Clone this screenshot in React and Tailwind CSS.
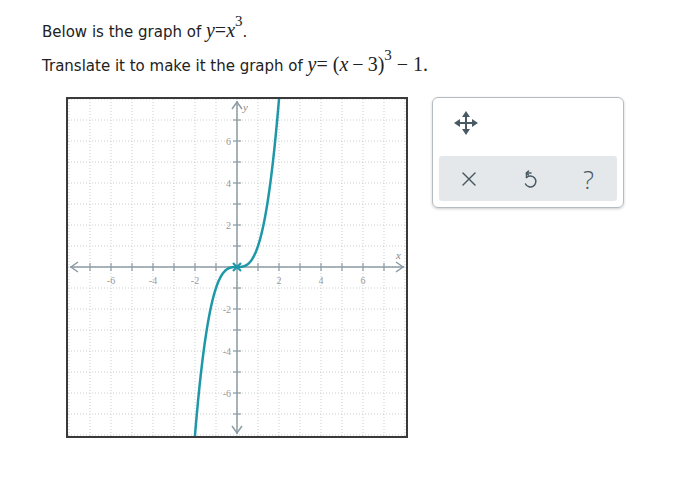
import React from 'react';

const U = 21;
const OX = 169;
const OY = 168;
const W = 338;
const H = 337;

const MoveIcon = () => (
  <svg width="28" height="28" viewBox="0 0 28 28" fill="#4a5a63" stroke="#4a5a63">
    <line x1="14" y1="5" x2="14" y2="23" strokeWidth="2" />
    <line x1="5" y1="14" x2="23" y2="14" strokeWidth="2" />
    <polygon points="14,2 10,8 18,8" stroke="none" />
    <polygon points="14,26 10,20 18,20" stroke="none" />
    <polygon points="2,14 8,10 8,18" stroke="none" />
    <polygon points="26,14 20,10 20,18" stroke="none" />
  </svg>
);

const CloseIcon = () => (
  <svg width="16" height="16" viewBox="0 0 16 16" stroke="#4a5a63" strokeWidth="1.5" strokeLinecap="round">
    <line x1="2" y1="2" x2="14" y2="14" />
    <line x1="2" y1="14" x2="14" y2="2" />
  </svg>
);

const UndoIcon = () => (
  <svg width="22" height="22" viewBox="0 0 22 22" fill="none" stroke="#4a5a63" strokeWidth="1.5" strokeLinecap="round" strokeLinejoin="round">
    <path d="M7.5 5 L7.5 9.5" />
    <path d="M7.5 9.5 A5.5 5.5 0 1 1 6.5 16" />
    <path d="M7.5 5 L12 5" />
    <path d="M9.5 3 L7.5 5 L9.5 7" />
  </svg>
);

const Graph = () => {
  const pts = [];
  for (let x = -2.1; x <= 2.1001; x += 0.01) {
    pts.push(`${(OX + x * U).toFixed(2)},${(OY - x * x * x * U).toFixed(2)}`);
  }
  const ints = [];
  for (let i = -8; i <= 8; i++) ints.push(i);
  const axis = '#8d9ba4';
  return (
    <svg width={W} height={H} className="block font-['Liberation_Serif',serif]">
      {ints.map((i) => (
        <g key={i}>
          <line x1={OX + i * U} y1="0" x2={OX + i * U} y2={H} stroke="#c9cdd0" strokeWidth="1" strokeDasharray="1 2" />
          <line x1="0" y1={OY - i * U} x2={W} y2={OY - i * U} stroke="#c9cdd0" strokeWidth="1" strokeDasharray="1 2" />
        </g>
      ))}
      <line x1="2" y1={OY} x2={W - 2} y2={OY} stroke={axis} strokeWidth="1.5" />
      <line x1={OX} y1="2" x2={OX} y2={H - 2} stroke={axis} strokeWidth="1.5" />
      <polyline points={`10,${OY - 5} 3,${OY} 10,${OY + 5}`} fill="none" stroke={axis} strokeWidth="1.5" />
      <polyline points={`${W - 10},${OY - 5} ${W - 3},${OY} ${W - 10},${OY + 5}`} fill="none" stroke={axis} strokeWidth="1.5" />
      <polyline points={`${OX - 5},10 ${OX},3 ${OX + 5},10`} fill="none" stroke={axis} strokeWidth="1.5" />
      <polyline points={`${OX - 5},${H - 10} ${OX},${H - 3} ${OX + 5},${H - 10}`} fill="none" stroke={axis} strokeWidth="1.5" />
      {ints.filter((i) => i !== 0 && Math.abs(i) < 8).map((i) => (
        <g key={'t' + i}>
          <line x1={OX + i * U} y1={OY - 4} x2={OX + i * U} y2={OY + 4} stroke={axis} strokeWidth="1.2" />
          <line x1={OX - 4} y1={OY - i * U} x2={OX + 4} y2={OY - i * U} stroke={axis} strokeWidth="1.2" />
        </g>
      ))}
      {[-6, -4, -2, 2, 4, 6].map((i) => (
        <g key={'l' + i} fill="#999" fontSize="10">
          <text x={OX + i * U} y={OY + 17} textAnchor="middle">{i}</text>
          <text x={OX - 6} y={OY - i * U + 3.5} textAnchor="end">{i}</text>
        </g>
      ))}
      <text x={OX + 159} y={OY - 8} fill="#888" fontSize="11" fontStyle="italic">x</text>
      <text x={OX + 6} y="12" fill="#888" fontSize="11" fontStyle="italic">y</text>
      <polyline points={pts.join(' ')} fill="none" stroke="#1e98a8" strokeWidth="2.5" />
      <g stroke="#1e98a8" strokeWidth="2.2">
        <line x1={OX - 4} y1={OY - 4} x2={OX + 4} y2={OY + 4} />
        <line x1={OX - 4} y1={OY + 4} x2={OX + 4} y2={OY - 4} />
      </g>
    </svg>
  );
};

const I = ({ children }) => (
  <span className="italic text-[20px] font-['Liberation_Serif',serif]">{children}</span>
);
const R = ({ children }) => (
  <span className="text-[20px] font-['Liberation_Serif',serif]">{children}</span>
);
const Sup = ({ children }) => (
  <sup className="text-[15px] font-['Liberation_Serif',serif] relative -top-[11px]">{children}</sup>
);

export default function App() {
  return (
    <div className="w-[700px] h-[501px] bg-white text-[#222] pl-[42px] pt-[16px] font-['DejaVu_Sans',Verdana,sans-serif]">
      <p className="text-[15px] leading-[28px]">
        Below is the graph of <I>y</I><R>=</R><I>x</I><Sup>3</Sup>.
      </p>
      <p className="text-[15px] leading-[28px] mt-[4px] whitespace-nowrap">
        Translate it to make it the graph of <I>y</I><R>= (</R><I>x</I><R>{'\u2009'}−{'\u2009'}3)</R><Sup>3</Sup><R> − 1.</R>
      </p>
      <div className="flex items-start gap-[24px] ml-[24px] mt-[17px]">
        <div className="border-2 border-[#3a3a3a] bg-white">
          <Graph />
        </div>
        <div className="w-[192px] h-[111px] rounded-[6px] border border-[#b5bcc1] shadow-[0_1px_3px_rgba(0,0,0,0.2)] p-[6px] flex flex-col">
          <div className="h-[52px] flex items-start pl-[13px] pt-[5px]">
            <MoveIcon />
          </div>
          <div className="flex-1 bg-[#e4e8eb] rounded-[3px] flex items-center justify-between pl-[22px] pr-[23px]">
            <CloseIcon />
            <UndoIcon />
            <span className="text-[#4a5a63] text-[26px] font-light leading-none font-['Open_Sans',sans-serif]">?</span>
          </div>
        </div>
      </div>
    </div>
  );
}
